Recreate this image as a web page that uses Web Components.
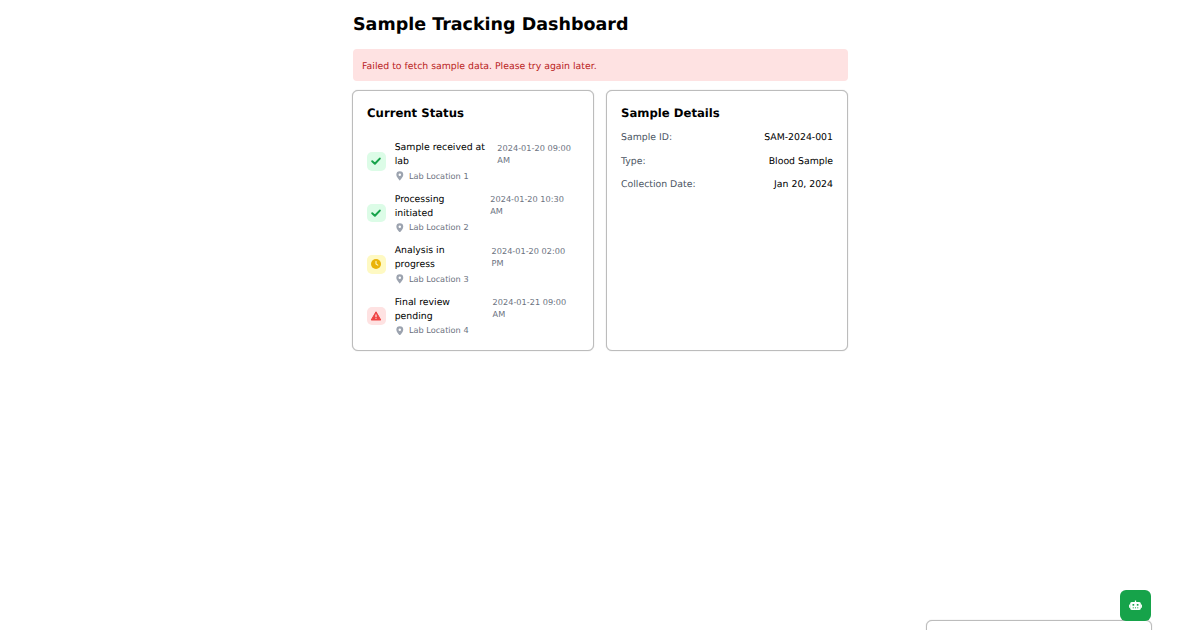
<!DOCTYPE html>
<html>
<head>
<meta charset="utf-8">
<title>Sample Tracking Dashboard</title>
<style>
  html, body { margin: 0; height: 100%; overflow: hidden; background: #fff; }
  body { font-family: "DejaVu Sans", sans-serif; color: #000; text-rendering: geometricPrecision; }
</style>
</head>
<body>
<sample-dashboard>
  <alert-banner>Failed to fetch sample data. Please try again later.</alert-banner>
  <info-card heading="Current Status">
    <status-item state="done" label="Sample received at lab" time="2024-01-20 09:00 AM" place="Lab Location 1"></status-item>
    <status-item state="done" label="Processing initiated" time="2024-01-20 10:30 AM" place="Lab Location 2"></status-item>
    <status-item state="progress" label="Analysis in progress" time="2024-01-20 02:00 PM" place="Lab Location 3"></status-item>
    <status-item state="pending" label="Final review pending" time="2024-01-21 09:00 AM" place="Lab Location 4"></status-item>
  </info-card>
  <info-card heading="Sample Details" compact>
    <detail-row name="Sample ID:" value="SAM-2024-001"></detail-row>
    <detail-row name="Type:" value="Blood Sample"></detail-row>
    <detail-row name="Collection Date:" value="Jan 20, 2024"></detail-row>
  </info-card>
</sample-dashboard>
<chat-widget></chat-widget>

<script>
  class SampleDashboard extends HTMLElement {
    constructor() {
      super();
      this.attachShadow({ mode: 'open' });
      this.shadowRoot.innerHTML = `
        <style>
          :host { display: block; width: 496px; margin: 0 auto; padding-top: 13px; }
          h1 { margin: 0 0 12px; padding-left: 1px; font-size: 17.5px; line-height: 24px; font-weight: 700; }
          .alert { display: block; margin-bottom: 9px; }
          .cards { display: grid; grid-template-columns: 1fr 1fr; gap: 12px; }
        </style>
        <h1>Sample Tracking Dashboard</h1>
        <div class="alert"><slot name="alert"></slot></div>
        <div class="cards"><slot></slot></div>
      `;
    }

    connectedCallback() {
      const banner = this.querySelector('alert-banner');
      if (banner) banner.slot = 'alert';
    }
  }

  class AlertBanner extends HTMLElement {
    constructor() {
      super();
      this.attachShadow({ mode: 'open' });
      this.shadowRoot.innerHTML = `
        <style>
          :host {
            display: block;
            margin: 0 0.5px;
            padding: 12px 9.6px 7.2px;
            border-radius: 4px;
            background: #fee2e2;
            color: #b91c1c;
            font-size: 9.34px;
            line-height: 12.8px;
          }
        </style>
        <slot></slot>
      `;
    }
  }

  class InfoCard extends HTMLElement {
    constructor() {
      super();
      this.attachShadow({ mode: 'open' });
      this.shadowRoot.innerHTML = `
        <style>
          :host {
            display: block;
            height: 261px;
            box-sizing: border-box;
            padding: 14px 14px;
            border: 1px solid #bcbcbc;
            border-radius: 6px;
            background: #fff;
            box-shadow: 0 0 1px rgba(0, 0, 0, 0.3);
          }
          h2 { margin: 0 0 20.5px; font-size: 11.68px; line-height: 16px; font-weight: 700; }
          :host([compact]) h2 { margin-bottom: 5px; }
          .list { display: flex; flex-direction: column; gap: 11px; }
          :host([compact]) .list { gap: 0; }
        </style>
        <h2></h2>
        <div class="list"><slot></slot></div>
      `;
    }

    connectedCallback() {
      this.shadowRoot.querySelector('h2').textContent = this.getAttribute('heading');
    }
  }

  const STATE_ICONS = {
    done: {
      bg: '#dcfce7',
      svg: '<path d="M3.2 7.2 5.9 9.8 10.8 4.6" fill="none" stroke="#16a34a" stroke-width="2" stroke-linecap="round" stroke-linejoin="round"/>'
    },
    progress: {
      bg: '#fef9c3',
      svg: '<circle cx="7" cy="7" r="5" fill="#eab308"/><path d="M7 4.2V7l1.8 1.1" fill="none" stroke="#fef9c3" stroke-width="1.1" stroke-linecap="round"/>'
    },
    pending: {
      bg: '#fee2e2',
      svg: '<path d="M7 2.8 11.8 11H2.2Z" fill="#ef4444" stroke="#ef4444" stroke-width="1" stroke-linejoin="round"/><path d="M7 5.6V8.2M7 9.2V10" stroke="#fee2e2" stroke-width="1.2"/>'
    }
  };

  class StatusItem extends HTMLElement {
    constructor() {
      super();
      this.attachShadow({ mode: 'open' });
    }

    connectedCallback() {
      const icon = STATE_ICONS[this.getAttribute('state')];
      this.shadowRoot.innerHTML = `
        <style>
          :host { display: flex; align-items: center; gap: 9px; }
          .badge {
            flex: none;
            width: 18.7px;
            height: 18.7px;
            margin-bottom: 0.5px;
            border-radius: 5px;
            display: flex;
            align-items: center;
            justify-content: center;
            background: ${icon.bg};
          }
          .badge svg { width: 14px; height: 14px; display: block; }
          .body { flex: 1; min-width: 0; }
          .top { display: flex; justify-content: space-between; gap: 8.2px; align-items: flex-start; }
          .label { font-size: 9.34px; line-height: 14px; }
          .time { padding: 0.5px 3.5px 0 0; font-size: 8.18px; line-height: 12px; color: #6b7280; }
          .place {
            display: flex;
            align-items: center;
            gap: 4.6px;
            margin-top: 0.5px;
            font-size: 8.18px;
            line-height: 12px;
            color: #6b7280;
          }
          .place svg { width: 9.6px; height: 9.6px; display: block; }
        </style>
        <div class="badge"><svg viewBox="0 0 14 14">${icon.svg}</svg></div>
        <div class="body">
          <div class="top">
            <div class="label">${this.getAttribute('label')}</div>
            <div class="time">${this.getAttribute('time')}</div>
          </div>
          <div class="place">
            <svg viewBox="0 0 10 10"><path fill-rule="evenodd" fill="#9ca3af" d="M5 .2A3.6 3.6 0 0 0 1.4 3.8C1.4 6.2 5 9.9 5 9.9S8.6 6.2 8.6 3.8A3.6 3.6 0 0 0 5 .2ZM5 2.5A1.3 1.3 0 1 1 5 5.1 1.3 1.3 0 0 1 5 2.5Z"/></svg>
            <span>${this.getAttribute('place')}</span>
          </div>
        </div>
      `;
    }
  }

  class DetailRow extends HTMLElement {
    constructor() {
      super();
      this.attachShadow({ mode: 'open' });
    }

    connectedCallback() {
      this.shadowRoot.innerHTML = `
        <style>
          :host {
            display: flex;
            justify-content: space-between;
            height: 23.4px;
            align-items: center;
            font-size: 9.34px;
          }
          .name { color: #4b5563; }
        </style>
        <span class="name">${this.getAttribute('name')}</span>
        <span>${this.getAttribute('value')}</span>
      `;
    }
  }

  class ChatWidget extends HTMLElement {
    constructor() {
      super();
      this.attachShadow({ mode: 'open' });
      this.shadowRoot.innerHTML = `
        <style>
          :host { display: block; }
          .panel {
            position: fixed;
            left: 926px;
            top: 620px;
            width: 226px;
            height: 300px;
            box-sizing: border-box;
            border: 1px solid #bcbcbc;
            border-radius: 6px;
            background: #fff;
            box-shadow: 0 0 1px rgba(0, 0, 0, 0.3);
          }
          .toggle {
            position: fixed;
            left: 1120px;
            top: 590px;
            width: 31px;
            height: 31px;
            border-radius: 6px;
            background: #16a34a;
            display: flex;
            align-items: center;
            justify-content: center;
          }
          svg { width: 13px; height: 13px; display: block; }
        </style>
        <div class="panel"></div>
        <div class="toggle">
          <svg viewBox="0 0 14 14">
            <path fill="#fff" d="M6.3 1.6h1.4v1.6H11a1.8 1.8 0 0 1 1.8 1.8v5a1.8 1.8 0 0 1-1.8 1.8H3a1.8 1.8 0 0 1-1.8-1.8V5A1.8 1.8 0 0 1 3 3.2h3.3Z"/>
            <rect x="0" y="6" width="1" height="3.4" fill="#fff"/>
            <rect x="13" y="6" width="1" height="3.4" fill="#fff"/>
            <rect x="3.8" y="5.4" width="1.8" height="1.8" fill="#16a34a"/>
            <rect x="8.4" y="5.4" width="1.8" height="1.8" fill="#16a34a"/>
            <rect x="4" y="9" width="1.2" height="1" fill="#16a34a"/>
            <rect x="6.4" y="9" width="1.2" height="1" fill="#16a34a"/>
            <rect x="8.8" y="9" width="1.2" height="1" fill="#16a34a"/>
          </svg>
        </div>
      `;
    }
  }

  customElements.define('sample-dashboard', SampleDashboard);
  customElements.define('alert-banner', AlertBanner);
  customElements.define('info-card', InfoCard);
  customElements.define('status-item', StatusItem);
  customElements.define('detail-row', DetailRow);
  customElements.define('chat-widget', ChatWidget);
</script>
</body>
</html>
